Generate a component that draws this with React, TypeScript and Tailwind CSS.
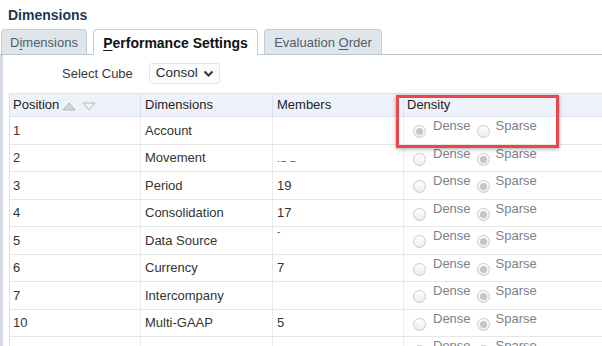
import React from 'react'

const ROWS = [
  { pos: '1', dim: 'Account', mem: '', dense: true },
  { pos: '2', dim: 'Movement', mem: 'frag1', dense: false },
  { pos: '3', dim: 'Period', mem: '19', dense: false },
  { pos: '4', dim: 'Consolidation', mem: '17', dense: false },
  { pos: '5', dim: 'Data Source', mem: 'frag2', dense: false },
  { pos: '6', dim: 'Currency', mem: '7', dense: false },
  { pos: '7', dim: 'Intercompany', mem: '', dense: false },
  { pos: '10', dim: 'Multi-GAAP', mem: '5', dense: false },
  { pos: '', dim: '', mem: '', dense: false },
]

function Radio({ checked }: { checked: boolean }) {
  return (
    <span className="mt-[7px] w-[13px] h-[13px] rounded-full border border-[#c9c9c9] bg-gradient-to-b from-white to-[#ececec] flex items-center justify-center shrink-0">
      {checked && <span className="w-[7px] h-[7px] rounded-full bg-[#c6c6c6]" />}
    </span>
  )
}

function Members({ v }: { v: string }) {
  if (v === 'frag1') return <span className="text-[9px] leading-none mt-[8px] tracking-[1px]">·‒ ‒</span>
  if (v === 'frag2') return <span className="text-[10px] leading-none -mt-[6px]">ˉ</span>
  return <span>{v}</span>
}

function SortIcons() {
  return (
    <span className="flex items-center gap-[6px] ml-[3px] mt-[2px]">
      <svg width="14" height="9" viewBox="0 0 14 9">
        <path d="M7 1 L13 8 L1 8 Z" fill="#d6d6d6" stroke="#b4b4b4" strokeWidth="1" />
      </svg>
      <svg width="14" height="9" viewBox="0 0 14 9">
        <path d="M1 1 L13 1 L7 8 Z" fill="#f4f4f4" stroke="#b4b4b4" strokeWidth="1" />
      </svg>
    </span>
  )
}

export default function App() {
  return (
    <div className="relative w-[602px] h-[346px] overflow-hidden bg-white text-[#333] font-['Liberation_Sans',Arial,sans-serif]">
      {/* Title */}
      <div className="h-[29px] pt-[7px] pl-[8px] text-[14px] leading-[16px] font-bold text-[#1d3653]">Dimensions</div>

      {/* Tabs */}
      <div className="h-[26px] flex items-end gap-[6px] pl-[1px] border-b border-[#b8c3ce]">
        <div className="w-[86px] h-[25px] flex justify-center pt-[5px] text-[13px] leading-[16px] text-[#4f5d6b] bg-[#e0e5e9] border border-b-0 border-[#c4cdd6] rounded-t-[4px]">
          <span>D<span className="underline underline-offset-2">i</span>mensions</span>
        </div>
        <div className="w-[165px] h-[26px] -mb-px flex justify-center pt-[5px] text-[14px] leading-[16px] font-bold text-[#111] bg-white border border-b-0 border-[#c4cdd6] rounded-t-[4px]">
          <span><span className="underline underline-offset-2">P</span>erformance Settings</span>
        </div>
        <div className="w-[118px] h-[25px] flex justify-center pt-[5px] text-[13px] leading-[16px] text-[#4f5d6b] bg-[#e0e5e9] border border-b-0 border-[#c4cdd6] rounded-t-[4px]">
          <span>Evaluation <span className="underline underline-offset-2">O</span>rder</span>
        </div>
      </div>

      {/* Panel */}
      <div className="border-l-[3px] border-[#d4dbe4] h-[300px]">
        <div className="flex items-center pt-[8px] h-[29px] text-[13px]">
          <span className="ml-[59px] text-[#3a3a3a]">Select Cube</span>
          <div className="ml-[16px] w-[71px] h-[21px] flex items-center pl-[6px] gap-[5px] border border-[#dfe5ec] rounded-[3px] bg-[#fbfcfe] text-[13.5px] text-[#2a2a2a]">
            <span>Consol</span>
            <svg width="11" height="8" viewBox="0 0 11 8">
              <path d="M1.5 1.5 L5.5 5.5 L9.5 1.5" fill="none" stroke="#333" strokeWidth="2" />
            </svg>
          </div>
        </div>

        {/* Table */}
        <div className="ml-[6px] mt-[9px] border-l border-[#dde3ea] text-[13px]">
          <div className="grid grid-cols-[131px_132px_131px_1fr] h-[24px] bg-[#eef2fa] border-t border-b border-[#dde3ea] text-[#222]">
            <div className="flex items-center pl-[3px] border-r border-[#dde3ea]">
              <span>Position</span>
              <SortIcons />
            </div>
            <div className="flex items-center pl-[4px] border-r border-[#dde3ea]">Dimensions</div>
            <div className="flex items-center pl-[4px] border-r border-[#dde3ea]">Members</div>
            <div className="flex items-center pl-[3px]">Density</div>
          </div>
          {ROWS.map((r, i) => (
            <div key={i} className="grid grid-cols-[131px_132px_131px_1fr] h-[27.5px] border-b border-[#e6e6e6]">
              <div className="flex items-center pl-[3px] border-r border-[#ebebeb]">{r.pos}</div>
              <div className="flex items-center pl-[4px] border-r border-[#ebebeb]">{r.dim}</div>
              <div className="flex items-center pl-[4px] border-r border-[#ebebeb]">
                <Members v={r.mem} />
              </div>
              <div className="flex items-start pl-[9px] leading-[16px] pt-[1px] text-[#7b808d]">
                <Radio checked={r.dense} />
                <span className="ml-[7px]">Dense</span>
                <span className="ml-[6px]"><Radio checked={!r.dense} /></span>
                <span className="ml-[6px]">Sparse</span>
              </div>
            </div>
          ))}
        </div>
      </div>

      {/* Highlight box */}
      <div className="absolute left-[396px] top-[95px] w-[163px] h-[53px] border-[3px] border-[#ea464c] shadow-[0_1px_4px_rgba(0,0,0,0.35)]" />
    </div>
  )
}
